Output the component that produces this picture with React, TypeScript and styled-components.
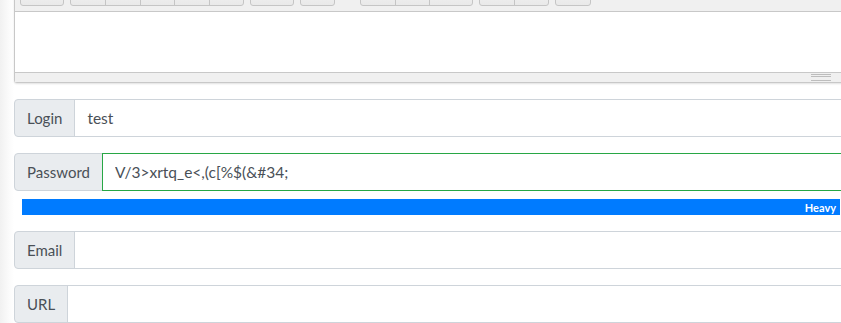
import React from 'react';
import styled, { createGlobalStyle } from 'styled-components';

const GlobalStyle = createGlobalStyle`
  html, body {
    margin: 0;
    padding: 0;
    background: #fff;
    overflow: hidden;
  }
  body {
    font-family: Lato, "Liberation Sans", sans-serif;
  }
`;

const Page = styled.div`
  height: 323px;
  padding-left: 14px;
  background: linear-gradient(to right, #f1f1f1 0px, #fbfbfb 9px, #fff 14px);
  overflow: hidden;
`;

const Content = styled.div`
  width: 834px;
  display: flex;
  flex-direction: column;
`;

/* editor */

const Editor = styled.div`
  margin-top: -26px;
  width: 870px;
  border: 1px solid #c8c8c8;
  border-right: none;
  border-radius: 0 0 0 3px;
  box-shadow: 0 1px 2px rgba(0, 0, 0, 0.12);
`;

const Toolbar = styled.div`
  display: flex;
  align-items: center;
  gap: 6px;
  height: 36px;
  padding: 0 5px;
  background: #f0f0f0;
  border-bottom: 1px solid #c8c8c8;
`;

const ButtonGroup = styled.div<{ $spaceBefore?: number }>`
  display: flex;
  height: 24px;
  margin-left: ${({ $spaceBefore }) => $spaceBefore ?? 0}px;
  border: 1px solid #c5c5c5;
  border-radius: 3px;
  background: linear-gradient(to bottom, #f8f8f8, #e9e9e9);
  overflow: hidden;
`;

const ToolButton = styled.div<{ $w: number }>`
  width: ${({ $w }) => $w}px;
  height: 100%;

  & + & {
    border-left: 1px solid #c5c5c5;
  }
`;

const EditArea = styled.div`
  height: 60px;
  background: #fff;
`;

const StatusBar = styled.div`
  display: flex;
  align-items: center;
  height: 9px;
  padding-left: 796px;
  background: #f0f0f0;
  border-top: 1px solid #c8c8c8;
`;

const Grip = styled.div`
  width: 20px;
  height: 5px;
  border-top: 1px solid #bdbdbd;
  border-bottom: 1px solid #bdbdbd;
  position: relative;

  &::after {
    content: '';
    position: absolute;
    left: 0;
    right: 0;
    top: 1px;
    height: 1px;
    background: #bdbdbd;
  }
`;

/* form */

const InputGroup = styled.div<{ $top: number }>`
  display: flex;
  height: 38px;
  margin-top: ${({ $top }) => $top}px;
  width: 850px;
`;

const Addon = styled.span`
  display: flex;
  align-items: center;
  padding: 0 12px;
  font-size: 15px;
  color: #495057;
  background: #e9ecef;
  border: 1px solid #ced4da;
  border-radius: 4px 0 0 4px;
  white-space: nowrap;
`;

const Field = styled.input<{ $valid?: boolean }>`
  flex: 1;
  min-width: 0;
  margin-left: -1px;
  padding: 0 12px;
  font-family: inherit;
  font-size: 15.5px;
  color: #495057;
  background: #fff;
  border: 1px solid ${({ $valid }) => ($valid ? '#28a745' : '#ced4da')};
  border-radius: 0;
  outline: none;
`;

const Strength = styled.div`
  display: flex;
  justify-content: flex-end;
  align-items: center;
  height: 16px;
  margin: 8px 8px 0 8px;
  padding-right: 4px;
  background: #007bff;
  color: #fff;
  font-size: 11px;
  font-weight: 700;
`;

const toolbar: { space?: number; buttons: number[] }[] = [
  { buttons: [42] },
  { buttons: [34, 34, 33, 34, 33] },
  { buttons: [42] },
  { buttons: [33] },
  { space: 19, buttons: [34, 33, 42] },
  { buttons: [34, 33] },
  { buttons: [34] },
];

const passwordValue = 'V/3>xrtq_e<,(c[%$(&#34;';

export default function App() {
  return (
    <>
      <GlobalStyle />
      <Page>
        <Content>
          <Editor>
            <Toolbar>
              {toolbar.map((g, i) => (
                <ButtonGroup key={i} $spaceBefore={g.space}>
                  {g.buttons.map((w, j) => (
                    <ToolButton key={j} $w={w} />
                  ))}
                </ButtonGroup>
              ))}
            </Toolbar>
            <EditArea />
            <StatusBar>
              <Grip />
            </StatusBar>
          </Editor>

          <InputGroup $top={16}>
            <Addon>Login</Addon>
            <Field defaultValue="test" />
          </InputGroup>

          <InputGroup $top={16}>
            <Addon>Password</Addon>
            <Field $valid defaultValue={passwordValue} />
          </InputGroup>
          <Strength>Heavy</Strength>

          <InputGroup $top={16}>
            <Addon>Email</Addon>
            <Field />
          </InputGroup>

          <InputGroup $top={16}>
            <Addon>URL</Addon>
            <Field />
          </InputGroup>
        </Content>
      </Page>
    </>
  );
}
